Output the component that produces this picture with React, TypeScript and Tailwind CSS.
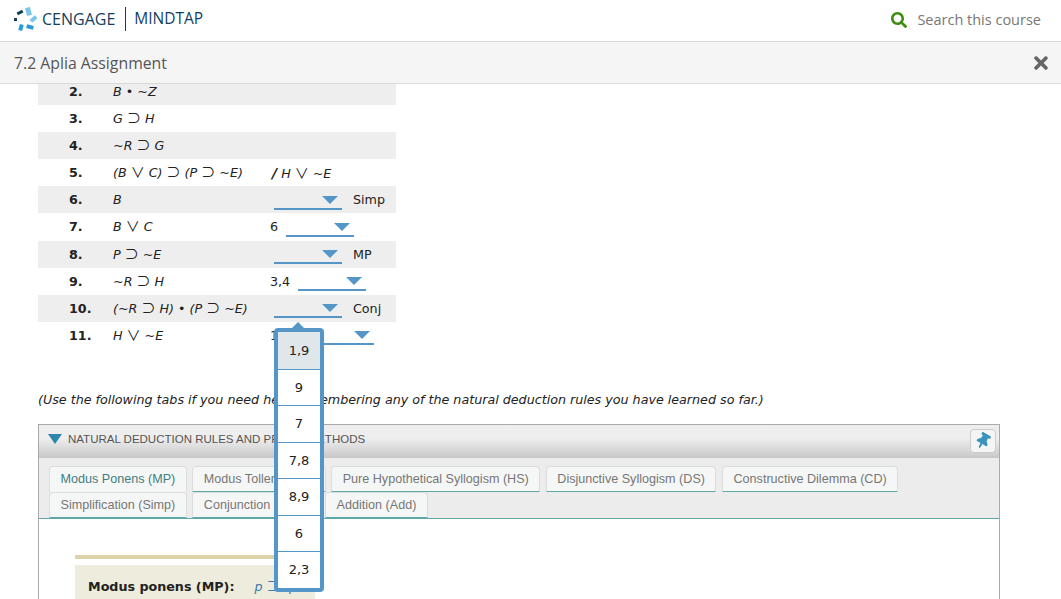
import { FaSearch, FaTimes, FaThumbtack } from "react-icons/fa";

function Select({ className = "" }: { className?: string }) {
  return (
    <div className={`relative h-6 w-17 border-b-2 border-[#5596c8] ${className}`}>
      <svg viewBox="0 0 16 8" className="absolute right-1 top-2.5 h-2 w-4">
        <path d="M0 0h16L8 8z" fill="#5596c8" />
      </svg>
    </div>
  );
}

function Formula({ text }: { text: string }) {
  return (
    <>
      {text.split(/([∨⊃])/).map((part, i) =>
        part === "∨" || part === "⊃" ? (
          <span key={i} className="font-['Noto_Sans_CJK_SC',sans-serif] text-sm/none not-italic">
            {part}
          </span>
        ) : (
          <span key={i}>{part}</span>
        )
      )}
    </>
  );
}

type Row = {
  n: string;
  f: string;
  pre?: string;
  sel?: boolean;
  just?: string;
  extra?: boolean;
};

const rows: Row[] = [
  { n: "2.", f: "B • ~Z" },
  { n: "3.", f: "G ⊃ H" },
  { n: "4.", f: "~R ⊃ G" },
  { n: "5.", f: "(B ∨ C) ⊃ (P ⊃ ~E)", extra: true },
  { n: "6.", f: "B", sel: true, just: "Simp" },
  { n: "7.", f: "B ∨ C", pre: "6", sel: true },
  { n: "8.", f: "P ⊃ ~E", sel: true, just: "MP" },
  { n: "9.", f: "~R ⊃ H", pre: "3,4", sel: true },
  { n: "10.", f: "(~R ⊃ H) • (P ⊃ ~E)", sel: true, just: "Conj" },
  { n: "11.", f: "H ∨ ~E", pre: "10,1", sel: true },
];

const row1 = ["Modus Tollens (MT)", "Pure Hypothetical Syllogism (HS)", "Disjunctive Syllogism (DS)", "Constructive Dilemma (CD)"];
const row2 = ["Simplification (Simp)", "Conjunction (Conj)", "Addition (Add)"];
const options = ["1,9", "9", "7", "7,8", "8,9", "6", "2,3"];

function Tab({ label, active }: { label: string; active?: boolean }) {
  return (
    <div
      className={`flex h-6.5 items-center rounded-t border border-[#ddd] bg-[#f5f6f6] px-[10.5px] ${
        active ? "border-[#5fa8a8] border-b-0 text-[#3f7f80]" : "border-b-[#5fa8a8] text-[#777]"
      }`}
    >
      {label}
    </div>
  );
}

export default function App() {
  return (
    <div className="relative flex h-[599px] w-full flex-col overflow-hidden bg-white font-['Open_Sans',sans-serif]">
      <header className="flex h-[42px] shrink-0 items-center justify-between border-b border-[#d9d9d9] pl-3.5 pr-5">
        <div className="flex items-center pb-1 text-[#123f5f]">
          <svg viewBox="0 0 24 24" className="mr-1 h-6 w-6">
            <rect x="12" y="0.5" width="5" height="8" fill="#7cc6ec" transform="rotate(-15 14.5 4.5)" />
            <rect x="16" y="10" width="7" height="4" fill="#7cc6ec" transform="rotate(-40 19.5 12)" />
            <rect x="3" y="4" width="6" height="3" fill="#123f5f" transform="rotate(-25 6 5.5)" />
            <rect x="0" y="11" width="3" height="3" fill="#123f5f" />
            <rect x="5" y="17.5" width="4" height="6" fill="#2a9bd6" transform="rotate(15 7 20.5)" />
            <rect x="12.5" y="18" width="7" height="4" fill="#2a9bd6" transform="rotate(15 16 20)" />
          </svg>
          <span className="text-base">CENGAGE</span>
          <span className="ml-2.5 mr-2 h-6 border-l border-[#123f5f]" />
          <span className="text-[15.5px]">MINDTAP</span>
        </div>
        <div className="flex items-center gap-2.5 pb-0.5">
          <FaSearch className="h-4 w-4 text-[#3d8b0f]" />
          <span className="text-[14.5px] text-[#777]">Search this course</span>
        </div>
      </header>

      <div className="flex h-[42px] shrink-0 items-center justify-between border-b border-[#d9d9d9] bg-[#f5f5f5] pl-3.5 pr-2.5">
        <span className="pt-0.5 text-[15.8px] text-[#555]">7.2 Aplia Assignment</span>
        <FaTimes className="h-5 w-5 text-[#666]" />
      </div>

      <main className="min-h-0 flex-1 overflow-hidden font-['DejaVu_Sans',sans-serif] text-[12.7px] text-[#222]">
        <div className="-mt-1.5 ml-[38px] w-[358px]">
          {rows.map((r, i) => (
            <div key={r.n} className={`flex h-[27.1px] items-center pl-7.75 ${i % 2 === 0 ? "bg-[#eee]" : ""}`}>
              <b className="w-11 shrink-0">{r.n}</b>
              <i className="w-39.25 shrink-0"><Formula text={r.f} /></i>
              {r.extra && (
                <span className="ml-0.5 italic">
                  <b className="mr-1 text-sm">/</b>
                  <Formula text="H ∨ ~E" />
                </span>
              )}
              {r.pre && <span className="mr-2">{r.pre}</span>}
              {r.sel && <Select className={r.pre ? "-mt-1" : "ml-1 -mt-1"} />}
              {r.just && <span className="ml-2.75">{r.just}</span>}
            </div>
          ))}
        </div>

        <p className="ml-[38px] mt-10.25 italic">
          (Use the following tabs if you need help remembering any of the natural deduction rules you have learned so far.)
        </p>

        <section className="ml-[38px] mt-3.75 w-[962px] border border-[#aaa] font-['Liberation_Sans',sans-serif] text-[12.6px]">
          <div className="flex h-[33px] items-center justify-between bg-gradient-to-b from-[#eee] from-40% to-[#c8c8c8] pl-2.25 pr-0.75">
            <div className="flex items-center gap-1.5 pb-1 text-[11.5px] text-[#555]">
              <svg viewBox="0 0 14 10" className="h-2.5 w-3.5">
                <path d="M0 0h14L7 10z" fill="#2e86ab" />
              </svg>
              NATURAL DEDUCTION RULES AND PROOF METHODS
            </div>
            <div className="flex h-6 w-6.5 items-center justify-center rounded border border-[#ccc] bg-[#f5f5f5]">
              <FaThumbtack className="h-4 w-4 rotate-30 text-[#3a93bd]" />
            </div>
          </div>
          <div className="border-b border-[#5fa8a8] bg-[#ececec] px-2.5 pt-2">
            <div className="flex gap-[5.5px]">
              <Tab label="Modus Ponens (MP)" active />
              {row1.map((t) => (
                <Tab key={t} label={t} />
              ))}
            </div>
            <div className="flex gap-[5.5px]">
              {row2.map((t) => (
                <Tab key={t} label={t} />
              ))}
            </div>
          </div>
          <div className="bg-white pl-9 pt-9">
            <div className="w-60 font-['DejaVu_Sans',sans-serif] text-[12.7px]">
              <div className="h-1 bg-[#dcd3a8]" />
              <div className="mt-1.5 flex h-12 gap-5 bg-[#eeecdc] px-3.25 py-3">
                <b>Modus ponens (MP):</b>
                <i className="text-[#3a78b0]"><Formula text="p ⊃ q" /></i>
              </div>
            </div>
          </div>
        </section>
      </main>

      <div className="absolute left-[274px] top-[328px] w-[50px] rounded border-4 border-[#5596c8] bg-white font-['DejaVu_Sans',sans-serif] text-[13px] text-[#222]">
        <svg viewBox="0 0 16 8" className="absolute -top-2.5 left-3 h-2 w-4">
          <path d="M0 8L8 0l8 8z" fill="#5596c8" />
        </svg>
        {options.map((o, i) => (
          <div
            key={o}
            className={`flex h-[36.5px] items-center justify-center ${i ? "border-t border-[#5596c8]" : "bg-[#dfe7ea]"}`}
          >
            {o}
          </div>
        ))}
      </div>
    </div>
  );
}
